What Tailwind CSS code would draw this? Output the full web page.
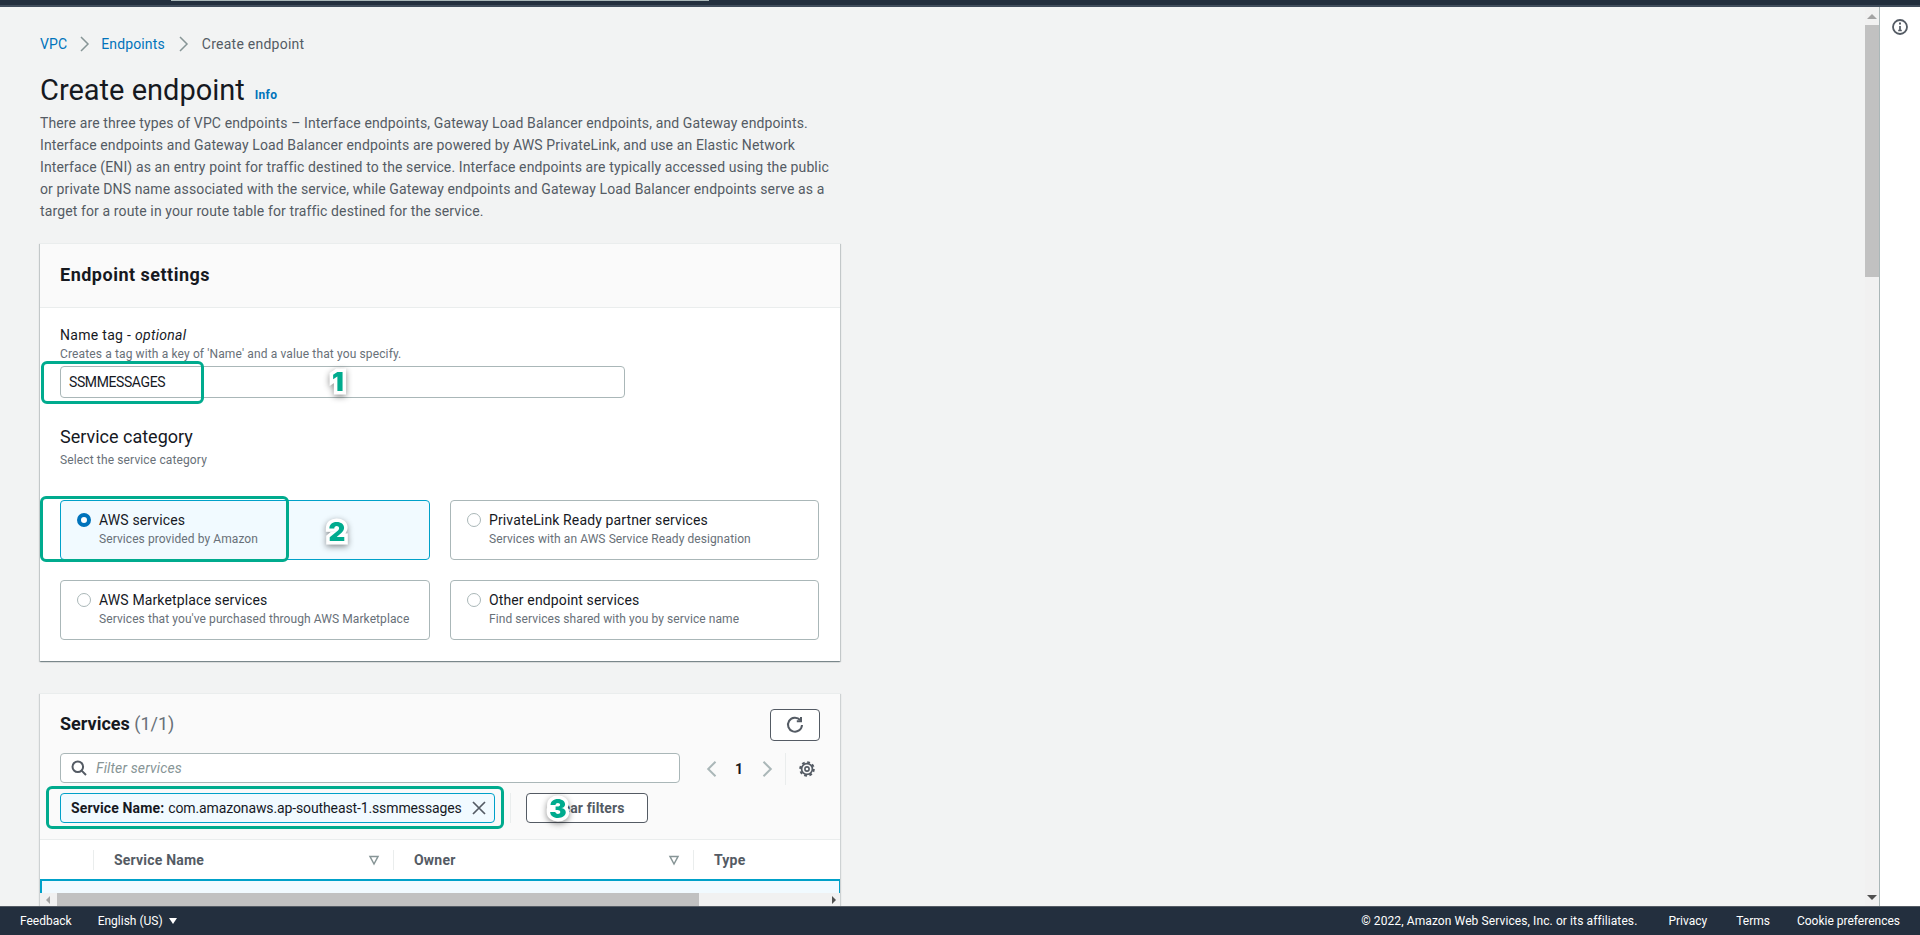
<!DOCTYPE html>
<html lang="en">
<head>
<meta charset="utf-8">
<title>Create endpoint</title>
<script src="https://cdn.jsdelivr.net/npm/@tailwindcss/browser@4"></script>
</head>
<body class="h-screen overflow-hidden bg-white font-['Roboto',sans-serif] text-sm tracking-[0.13px] text-[#16191f]">
<div class="flex h-[935px] flex-col">
  <header class="relative h-[7px] shrink-0 border-b-2 border-[#414d5c] bg-[#232f3e]">
    <div class="absolute left-[171px] top-0 h-px w-[538px] bg-[#aab7b8]"></div>
  </header>
  <div class="flex min-h-0 flex-1">
    <main class="relative min-w-0 flex-1 overflow-hidden bg-[#f2f3f3]">
      <div class="w-[840px] pl-10 pt-[27px]">
        <nav class="flex h-5 items-center leading-5">
          <a class="text-[#0073bb]">VPC</a>
          <svg class="mx-[9px] h-4 w-4 text-[#879596]" viewBox="0 0 16 16" fill="none" stroke="currentColor" stroke-width="1.5"><path d="M5 1l7 7-7 7"/></svg>
          <a class="text-[#0073bb]">Endpoints</a>
          <svg class="ml-[10px] mr-[11px] h-4 w-4 text-[#879596]" viewBox="0 0 16 16" fill="none" stroke="currentColor" stroke-width="1.5"><path d="M5 1l7 7-7 7"/></svg>
          <span class="tracking-[0.25px] text-[#545b64]">Create endpoint</span>
        </nav>
        <div class="mt-[18px] flex h-9 items-center">
          <h1 class="text-[29px] leading-9 font-normal tracking-normal">Create endpoint</h1>
          <a class="ml-[10px] mt-[9px] text-xs font-bold tracking-[0.3px] text-[#0073bb]">Info</a>
        </div>
        <p class="mt-1 whitespace-nowrap leading-[22px] tracking-[0.12px] text-[#545b64]">There are three types of VPC endpoints – Interface endpoints, Gateway Load Balancer endpoints, and Gateway endpoints.<br>Interface endpoints and Gateway Load Balancer endpoints are powered by AWS PrivateLink, and use an Elastic Network<br>Interface (ENI) as an entry point for traffic destined to the service. Interface endpoints are typically accessed using the public<br>or private DNS name associated with the service, while Gateway endpoints and Gateway Load Balancer endpoints serve as a<br>target for a route in your route table for traffic destined for the service.</p>

        <section class="mt-[21px] h-[418px] border-t border-[#eaeded] bg-white shadow-[0_1px_1px_rgba(0,28,36,0.3),1px_1px_1px_rgba(0,28,36,0.15),-1px_1px_1px_rgba(0,28,36,0.15)]">
          <div class="flex h-[64px] items-center border-b border-[#eaeded] bg-[#fafafa] px-5 pb-[2px]">
            <h2 class="text-lg font-bold tracking-[0.5px]">Endpoint settings</h2>
          </div>
          <div class="px-5">
            <div class="mt-4 h-[22px] leading-[22px] tracking-[0.3px]">Name tag - <i>optional</i></div>
            <div class="h-4 text-xs leading-4 text-[#687078]">Creates a tag with a key of 'Name' and a value that you specify.</div>
            <div class="mt-1 flex h-8 w-[565px] items-center rounded-sm border border-[#aab7b8] bg-white px-2 tracking-[-0.4px]">SSMMESSAGES</div>
            <h3 class="mt-6 h-[30px] text-lg font-normal leading-[30px] tracking-normal">Service category</h3>
            <div class="h-4 text-xs leading-4 text-[#687078]">Select the service category</div>
            <div class="mt-8 grid w-[760px] grid-cols-[370px_369px] gap-x-[20px] gap-y-[20px]">
              <div class="flex h-[60px] rounded-sm border border-[#00a1c9] bg-[#f1faff] px-4 pt-[9px]">
                <span class="mt-[3px] h-[14px] w-[14px] shrink-0 rounded-full border-[4px] border-[#0073bb] bg-white"></span>
                <div class="ml-2"><div class="leading-5">AWS services</div><div class="text-xs leading-[18px] tracking-[0.08px] text-[#687078]">Services provided by Amazon</div></div>
              </div>
              <div class="flex h-[60px] rounded-sm border border-[#aab7b8] px-4 pt-[9px]">
                <span class="mt-[3px] h-[14px] w-[14px] shrink-0 rounded-full border border-[#aab7b8] bg-white"></span>
                <div class="ml-2"><div class="leading-5">PrivateLink Ready partner services</div><div class="text-xs leading-[18px] tracking-[0.08px] text-[#687078]">Services with an AWS Service Ready designation</div></div>
              </div>
              <div class="flex h-[60px] rounded-sm border border-[#aab7b8] px-4 pt-[9px]">
                <span class="mt-[3px] h-[14px] w-[14px] shrink-0 rounded-full border border-[#aab7b8] bg-white"></span>
                <div class="ml-2"><div class="leading-5">AWS Marketplace services</div><div class="text-xs leading-[18px] tracking-[0.08px] text-[#687078]">Services that you've purchased through AWS Marketplace</div></div>
              </div>
              <div class="flex h-[60px] rounded-sm border border-[#aab7b8] px-4 pt-[9px]">
                <span class="mt-[3px] h-[14px] w-[14px] shrink-0 rounded-full border border-[#aab7b8] bg-white"></span>
                <div class="ml-2"><div class="leading-5">Other endpoint services</div><div class="text-xs leading-[18px] tracking-[0.08px] text-[#687078]">Find services shared with you by service name</div></div>
              </div>
            </div>
          </div>
        </section>

        <section class="mt-8 border-t border-[#eaeded] bg-white shadow-[1px_1px_1px_rgba(0,28,36,0.15),-1px_1px_1px_rgba(0,28,36,0.15)]">
          <div class="h-[146px] border-b border-[#eaeded] bg-[#fafafa] px-5 pt-[15px]">
            <div class="flex h-8 items-center justify-between">
              <h2 class="mb-[2px] text-lg font-bold tracking-normal">Services <span class="font-normal text-[#687078]">(1/1)</span></h2>
              <button class="flex h-8 w-[50px] items-center justify-center rounded-sm border border-[#545b64] bg-white text-[#545b64]">
                <svg class="h-[18px] w-[18px]" viewBox="0 0 18 18" fill="none" stroke="currentColor" stroke-width="2"><path d="M14.2 4A7 7 0 1 0 16 9"/><path d="M15 1v4.2h-4.2"/></svg>
              </button>
            </div>
            <div class="mt-3 flex h-8 items-start">
              <div class="flex h-[30px] w-[620px] items-center rounded-sm border border-[#aab7b8] bg-white pl-[10px]">
                <svg class="h-4 w-4 text-[#545b64]" viewBox="0 0 16 16" fill="none" stroke="currentColor" stroke-width="2"><circle cx="6.8" cy="6.8" r="5.3"/><path d="M10.6 10.6L15 15"/></svg>
                <span class="ml-[9px] italic text-[#879596]">Filter services</span>
              </div>
              <svg class="ml-6 mt-2 h-4 w-4 text-[#aab7b8]" viewBox="0 0 16 16" fill="none" stroke="currentColor" stroke-width="2"><path d="M11.5.7L4.2 8l7.3 7.3"/></svg>
              <span class="ml-[15px] mt-[6px] w-2 leading-5 font-bold">1</span>
              <svg class="ml-4 mt-2 h-4 w-4 text-[#aab7b8]" viewBox="0 0 16 16" fill="none" stroke="currentColor" stroke-width="2"><path d="M4.5.7L11.8 8l-7.3 7.3"/></svg>
              <span class="ml-[10px] h-8 w-px bg-[#eaeded]"></span>
              <svg class="ml-[13px] mt-2 h-4 w-4 text-[#545b64]" viewBox="0 0 16 16" fill="none" stroke="currentColor"><circle cx="8" cy="8" r="5.4" stroke-width="1.7"/><circle cx="8" cy="8" r="6.8" stroke-width="2" stroke-dasharray="2.8 2.54"/><circle cx="8" cy="8" r="2.1" stroke-width="1.6"/></svg>
            </div>
            <div class="mt-2 flex h-[30px] items-center">
              <div class="flex h-[30px] w-[435px] items-center whitespace-nowrap rounded-sm border border-[#00a1c9] bg-[#f1faff] pl-[10px]">
                <b class="font-bold">Service Name:</b><span class="ml-1 tracking-[-0.12px]">com.amazonaws.ap-southeast-1.ssmmessages</span>
                <svg class="ml-auto mr-[7px] h-4 w-4 text-[#545b64]" viewBox="0 0 16 16" fill="none" stroke="currentColor" stroke-width="1.7"><path d="M2 2l12 12M14 2L2 14"/></svg>
              </div>
              <span class="ml-[15px] h-[30px] w-px bg-[#eaeded]"></span>
              <button class="ml-[15px] h-[30px] w-[122px] rounded-sm border border-[#545b64] bg-white font-bold text-[#545b64]">Clear filters</button>
            </div>
          </div>
          <div class="flex h-[39px] items-center font-bold tracking-[0.2px] text-[#545b64]">
            <div class="h-5 w-[54px] border-r border-[#eaeded]"></div>
            <div class="flex h-5 w-[300px] items-center justify-between border-r border-[#eaeded] pl-5 pr-[13px]">Service Name<svg class="h-3 w-3 text-[#879596]" viewBox="0 0 12 12" fill="none" stroke="currentColor" stroke-width="1.5"><path d="M2 2.5h8L6 10z"/></svg></div>
            <div class="flex h-5 w-[300px] items-center justify-between border-r border-[#eaeded] pl-5 pr-[13px]">Owner<svg class="h-3 w-3 text-[#879596]" viewBox="0 0 12 12" fill="none" stroke="currentColor" stroke-width="1.5"><path d="M2 2.5h8L6 10z"/></svg></div>
            <div class="pl-5">Type</div>
          </div>
          <div class="h-[14px] border-l-2 border-r border-t-2 border-[#00a1c9] bg-[#f1faff]"></div>
          <div class="flex h-[13px] items-center bg-[#f1f1f1]">
            <span class="ml-[6px] w-0 border-y-[4px] border-r-[4px] border-y-transparent border-r-[#a3a3a3]"></span>
            <span class="ml-[7px] h-[13px] w-[642px] bg-[#c1c1c1]"></span>
            <span class="ml-auto mr-[4px] w-0 border-y-[4px] border-l-[4px] border-y-transparent border-l-[#505050]"></span>
          </div>
        </section>
      </div>

      <div class="pointer-events-none absolute left-[41px] top-[354px] h-[43px] w-[163px] rounded-md border-[3px] border-[#00ab8e]"></div>
      <div class="pointer-events-none absolute left-[40px] top-[489px] h-[66px] w-[249px] rounded-md border-[3px] border-[#00ab8e]"></div>
      <div class="pointer-events-none absolute left-[46px] top-[779px] h-[43px] w-[458px] rounded-md border-[3px] border-[#00ab8e]"></div>
      <span class="pointer-events-none absolute left-[318px] top-[361px] w-10 text-center font-['Inter',sans-serif] text-[26px] leading-7 font-black tracking-normal text-[#00ab8e] [-webkit-text-stroke:7px_#fff] [paint-order:stroke_fill] [filter:drop-shadow(0_2px_3px_rgba(0,0,0,0.45))]">1</span>
      <span class="pointer-events-none absolute left-[317px] top-[511px] w-10 text-center font-['Inter',sans-serif] text-[26px] leading-7 font-black tracking-normal text-[#00ab8e] [-webkit-text-stroke:7px_#fff] [paint-order:stroke_fill] [filter:drop-shadow(0_2px_3px_rgba(0,0,0,0.45))]">2</span>
      <span class="pointer-events-none absolute left-[538px] top-[788px] w-10 text-center font-['Inter',sans-serif] text-[26px] leading-7 font-black tracking-normal text-[#00ab8e] [-webkit-text-stroke:7px_#fff] [paint-order:stroke_fill] [filter:drop-shadow(0_2px_3px_rgba(0,0,0,0.45))]">3</span>
    </main>

    <div class="flex w-[14px] shrink-0 flex-col items-center bg-[#f1f1f1]">
      <span class="mt-[7px] h-0 w-0 border-x-[5px] border-b-[5px] border-x-transparent border-b-[#a3a3a3]"></span>
      <span class="mt-[6px] h-[252px] w-full bg-[#c1c1c1]"></span>
      <span class="mb-[6px] mt-auto h-0 w-0 border-x-[5px] border-t-[5px] border-x-transparent border-t-[#505050]"></span>
    </div>
    <aside class="flex w-[41px] shrink-0 justify-center border-l border-[#aab7b8] bg-white pt-3">
      <svg class="h-4 w-4 text-[#545b64]" viewBox="0 0 16 16" fill="none" stroke="currentColor"><circle cx="8" cy="8" r="7" stroke-width="1.8"/><path d="M8 7v4.5M6.2 11.5h3.6" stroke-width="1.7"/><path d="M7 4.5h2" stroke-width="2"/></svg>
    </aside>
  </div>
  <footer class="flex h-[29px] shrink-0 items-center border-t border-[#545b64] bg-[#232f3e] pl-5 pr-5 text-xs tracking-normal text-white">
    <a>Feedback</a>
    <a class="ml-[26px] flex items-center">English (US)<span class="ml-[6px] h-0 w-0 border-x-[4px] border-t-[6px] border-x-transparent border-t-white"></span></a>
    <span class="ml-auto tracking-[0.1px]">© 2022, Amazon Web Services, Inc. or its affiliates.</span>
    <a class="ml-[31px]">Privacy</a>
    <a class="ml-[29px]">Terms</a>
    <a class="ml-[27px]">Cookie preferences</a>
  </footer>
</div>
</body>
</html>
